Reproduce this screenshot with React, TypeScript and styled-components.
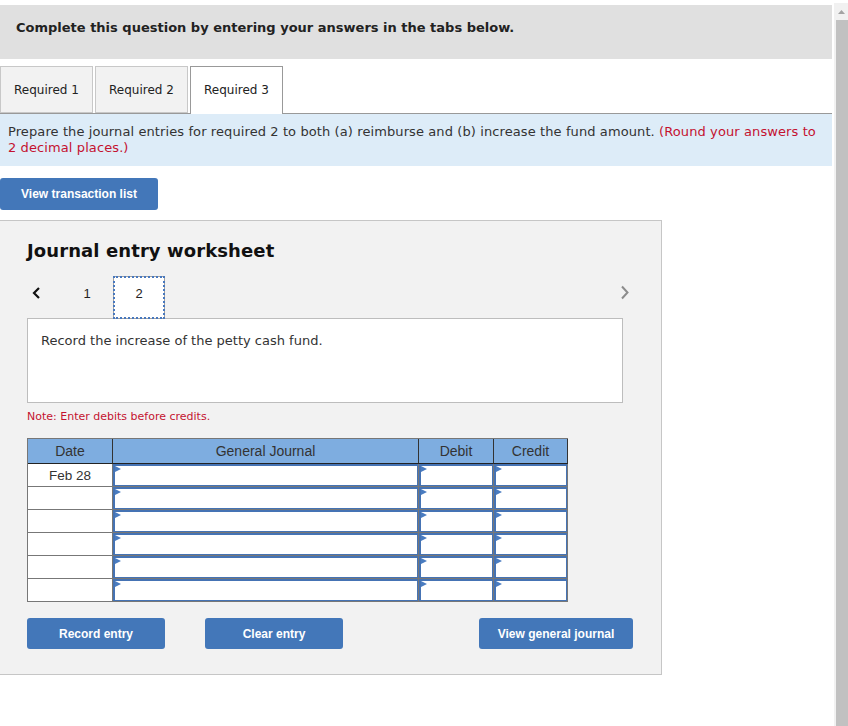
import { Fragment } from "react";
import styled, { createGlobalStyle } from "styled-components";

const vFont = `"DejaVu Sans", Verdana, sans-serif`;
const aFont = `"Liberation Sans", Arial, Helvetica, sans-serif`;

const GlobalStyle = createGlobalStyle`
  html, body {
    margin: 0;
    padding: 0;
    background: #fff;
  }
  body {
    font-family: ${vFont};
    color: #333;
  }
`;

const Page = styled.div`
  display: flex;
  width: 848px;
  height: 726px;
  overflow: hidden;
`;

const Main = styled.main`
  width: 832px;
  padding-top: 5px;
`;

const Banner = styled.div`
  box-sizing: border-box;
  height: 54px;
  padding: 15px 0 0 16px;
  background: #e0e0e0;
  font-size: 13px;
  line-height: 16px;
  font-weight: bold;
  color: #222;
`;

const TabBar = styled.div`
  display: flex;
  align-items: flex-end;
  gap: 2px;
  margin-top: 7px;
  border-bottom: 1px solid #999;
`;

const Tab = styled.div<{ $active?: boolean }>`
  box-sizing: border-box;
  width: 93px;
  height: ${(p) => (p.$active ? 48 : 47)}px;
  margin-bottom: ${(p) => (p.$active ? -1 : 0)}px;
  padding-bottom: ${(p) => (p.$active ? 1 : 0)}px;
  display: flex;
  align-items: center;
  justify-content: center;
  font-size: 12px;
  color: #222;
  background: ${(p) => (p.$active ? "#fff" : "#f2f2f2")};
  border: 1px solid ${(p) => (p.$active ? "#999" : "#c8c8c8")};
  border-bottom: ${(p) => (p.$active ? "none" : "1px solid #c8c8c8")};
`;

const Instructions = styled.div`
  padding: 10px 8px;
  background: #ddecf8;
  font-size: 13px;
  line-height: 16px;
  letter-spacing: 0.1px;
  color: #333;
`;

const Red = styled.span`
  color: #c41230;
`;

const ActionButton = styled.button<{ $width: number }>`
  box-sizing: border-box;
  width: ${(p) => p.$width}px;
  height: 31px;
  padding: 0;
  border: none;
  border-radius: 3px;
  background: #4377b9;
  color: #fff;
  font-family: ${aFont};
  font-size: 12px;
  font-weight: bold;
  cursor: pointer;
`;

const TransactionButton = styled(ActionButton)`
  display: block;
  height: 32px;
  margin-top: 12px;
`;

const Worksheet = styled.section`
  box-sizing: border-box;
  width: 662px;
  margin-top: 10px;
  padding: 19px 0 25px 27px;
  background: #f2f2f2;
  border: 1px solid #c6c6c6;
  border-left: none;
`;

const Title = styled.h2`
  margin: 0;
  font-size: 18px;
  line-height: 22px;
  font-weight: bold;
  letter-spacing: 0.1px;
  color: #111;
`;

const NavRow = styled.div`
  display: flex;
  align-items: flex-start;
  width: 602px;
  height: 43px;
  margin-top: 14px;
`;

const Arrow = styled.svg<{ $left?: boolean }>`
  margin-top: ${(p) => (p.$left ? 11 : 9)}px;
  margin-left: ${(p) => (p.$left ? "5px" : "auto")};
`;

const Pages = styled.div`
  display: flex;
  margin-left: 20px;
`;

const PageTab = styled.div<{ $active?: boolean }>`
  position: relative;
  z-index: 1;
  box-sizing: border-box;
  width: 52px;
  height: 43px;
  padding-top: 9px;
  text-align: center;
  font-family: ${aFont};
  font-size: 13px;
  line-height: 16px;
  color: #222;
  background: ${(p) => (p.$active ? "#fff" : "transparent")};
  border: 1px solid ${(p) => (p.$active ? "#a0a0a0" : "transparent")};
  outline: ${(p) => (p.$active ? "2px dotted #4878be" : "none")};
  outline-offset: -2px;
`;

const RecordBox = styled.div`
  box-sizing: border-box;
  width: 596px;
  height: 85px;
  margin-top: -1px;
  padding: 14px 13px;
  background: #fff;
  border: 1px solid #bdbdbd;
  font-size: 13px;
  line-height: 16px;
  color: #333;
`;

const Note = styled.div`
  margin-top: 7px;
  font-size: 11px;
  line-height: 14px;
  color: #c41230;
`;

const Grid = styled.div`
  display: grid;
  grid-template-columns: 85px 306px 75px 74px;
  width: 541px;
  box-sizing: border-box;
  margin-top: 14px;
  border-top: 1px solid #777;
  border-left: 1px solid #777;
  font-family: ${aFont};
  font-size: 13px;
  color: #333;
`;

const HeadCell = styled.div`
  height: 25px;
  box-sizing: border-box;
  display: flex;
  align-items: center;
  justify-content: center;
  background: #7eade0;
  border-right: 1px solid #333;
  border-bottom: 1px solid #222;
  font-size: 14px;
`;

const DateCell = styled.div`
  height: 23px;
  box-sizing: border-box;
  display: flex;
  align-items: center;
  justify-content: center;
  background: #fff;
  border-right: 1px solid #777;
  border-bottom: 1px solid #777;
  font-size: 13.5px;
`;

const EntryCell = styled.div`
  height: 23px;
  box-sizing: border-box;
  border-right: 1px solid #777;
  border-bottom: 1px solid #777;
`;

const EntryInput = styled.div`
  position: relative;
  box-sizing: border-box;
  height: 100%;
  background: #fff;
  border: 1px solid #4573b4;
  box-shadow: inset 0 1px 0 #4573b4, inset 1px 0 0 #4573b4;

  &::before {
    content: "";
    position: absolute;
    top: 1px;
    left: 1px;
    border-left: 6px solid #4a7cc0;
    border-top: 3px solid transparent;
    border-bottom: 3px solid transparent;
  }
`;

const ButtonRow = styled.div`
  display: flex;
  gap: 40px;
  width: 606px;
  margin-top: 16px;

  & > :last-child {
    margin-left: auto;
  }
`;

const ScrollTrack = styled.div`
  display: flex;
  flex-direction: column;
  align-items: flex-end;
  width: 14px;
  margin: 3px 0 0 2px;
  background: #f1f1f1;
`;

const ScrollArrow = styled.svg`
  align-self: center;
  margin-top: 7px;
`;

const ScrollThumb = styled.div`
  flex: 1;
  width: 12px;
  margin-top: 6px;
  background: #c1c1c1;
`;

const tabs = ["Required 1", "Required 2", "Required 3"];
const rows = ["Feb 28", "", "", "", "", ""];

export default function App() {
  return (
    <>
      <GlobalStyle />
      <Page>
        <Main>
          <Banner>
            Complete this question by entering your answers in the tabs below.
          </Banner>
          <TabBar>
            {tabs.map((t) => (
              <Tab key={t} $active={t === "Required 3"}>
                {t}
              </Tab>
            ))}
          </TabBar>
          <Instructions>
            Prepare the journal entries for required 2 to both (a) reimburse
            and (b) increase the fund amount.{" "}
            <Red>(Round your answers to 2 decimal places.)</Red>
          </Instructions>
          <TransactionButton $width={158}>View transaction list</TransactionButton>

          <Worksheet>
            <Title>Journal entry worksheet</Title>
            <NavRow>
              <Arrow $left width="9" height="12" viewBox="0 0 9 12">
                <polyline
                  points="7,1 2,6 7,11"
                  fill="none"
                  stroke="#111"
                  strokeWidth="2.2"
                />
              </Arrow>
              <Pages>
                <PageTab>1</PageTab>
                <PageTab $active>2</PageTab>
              </Pages>
              <Arrow width="9" height="15" viewBox="0 0 9 15">
                <polyline
                  points="2,1.5 7.5,7.5 2,13.5"
                  fill="none"
                  stroke="#8c8c8c"
                  strokeWidth="2"
                />
              </Arrow>
            </NavRow>
            <RecordBox>Record the increase of the petty cash fund.</RecordBox>
            <Note>Note: Enter debits before credits.</Note>

            <Grid>
              <HeadCell>Date</HeadCell>
              <HeadCell>General Journal</HeadCell>
              <HeadCell>Debit</HeadCell>
              <HeadCell>Credit</HeadCell>
              {rows.map((date, i) => (
                <Fragment key={i}>
                  <DateCell>{date}</DateCell>
                  <EntryCell>
                    <EntryInput />
                  </EntryCell>
                  <EntryCell>
                    <EntryInput />
                  </EntryCell>
                  <EntryCell>
                    <EntryInput />
                  </EntryCell>
                </Fragment>
              ))}
            </Grid>

            <ButtonRow>
              <ActionButton $width={138}>Record entry</ActionButton>
              <ActionButton $width={138}>Clear entry</ActionButton>
              <ActionButton $width={154}>View general journal</ActionButton>
            </ButtonRow>
          </Worksheet>
        </Main>
        <ScrollTrack>
          <ScrollArrow width="7" height="4" viewBox="0 0 7 4">
            <polygon points="0,4 3.5,0 7,4" fill="#a3a3a3" />
          </ScrollArrow>
          <ScrollThumb />
        </ScrollTrack>
      </Page>
    </>
  );
}
